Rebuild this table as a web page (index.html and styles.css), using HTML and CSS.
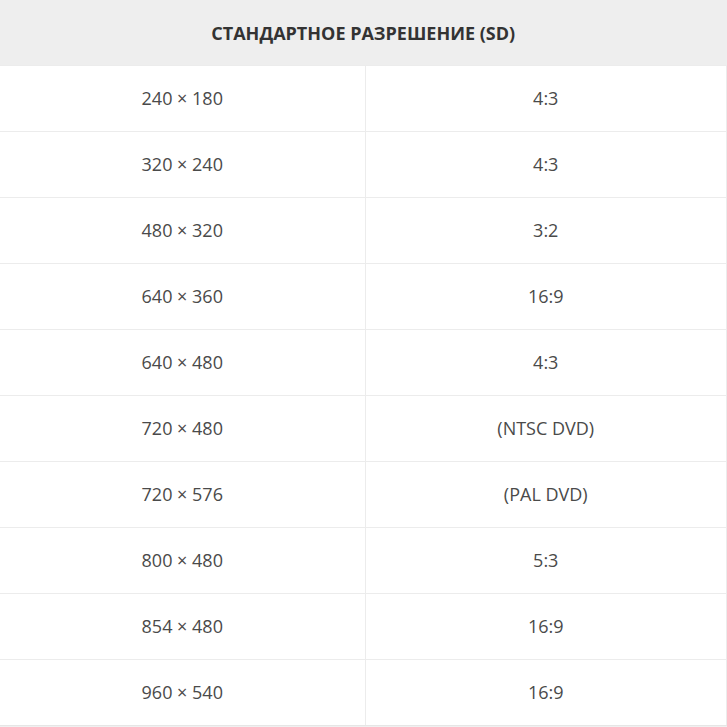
FILE: index.html
```html
<!DOCTYPE html>
<html lang="ru">
<head>
<meta charset="utf-8">
<link rel="stylesheet" href="styles.css">
</head>
<body>
<table class="res-table">
  <colgroup><col class="col-res"><col class="col-ratio"></colgroup>
  <thead>
    <tr><th colspan="2">Стандартное разрешение (SD)</th></tr>
  </thead>
  <tbody>
    <tr><td>240 × 180</td><td>4:3</td></tr>
    <tr><td>320 × 240</td><td>4:3</td></tr>
    <tr><td>480 × 320</td><td>3:2</td></tr>
    <tr><td>640 × 360</td><td>16:9</td></tr>
    <tr><td>640 × 480</td><td>4:3</td></tr>
    <tr><td>720 × 480</td><td>(NTSC DVD)</td></tr>
    <tr><td>720 × 576</td><td>(PAL DVD)</td></tr>
    <tr><td>800 × 480</td><td>5:3</td></tr>
    <tr><td>854 × 480</td><td>16:9</td></tr>
    <tr><td>960 × 540</td><td>16:9</td></tr>
  </tbody>
</table>
</body>
</html>
```
FILE: styles.css
```css
html, body {
  margin: 0;
  padding: 0;
  background: #f0f0f0;
}
body {
  font-family: "Open Sans", "Liberation Sans", sans-serif;
  width: 727px;
  height: 727px;
  overflow: hidden;
}
.res-table {
  width: 727px;
  border-collapse: collapse;
  table-layout: fixed;
  background: #fff;
}
.col-res {
  width: 365px;
}
.res-table th {
  height: 65px;
  padding: 0;
  background: #eeeeee;
  color: #333;
  font-size: 18px;
  font-weight: 700;
  text-transform: uppercase;
  text-align: center;
  vertical-align: middle;
}
.res-table td {
  height: 63px;
  padding: 0 0 2px;
  border-top: 1px solid #ececec;
  border-right: 1px solid #ececec;
  color: #4a4a4a;
  font-size: 18px;
  text-align: center;
  vertical-align: middle;
}
.res-table tbody tr:last-child td {
  border-bottom: 1px solid #e6e6e6;
}
```
